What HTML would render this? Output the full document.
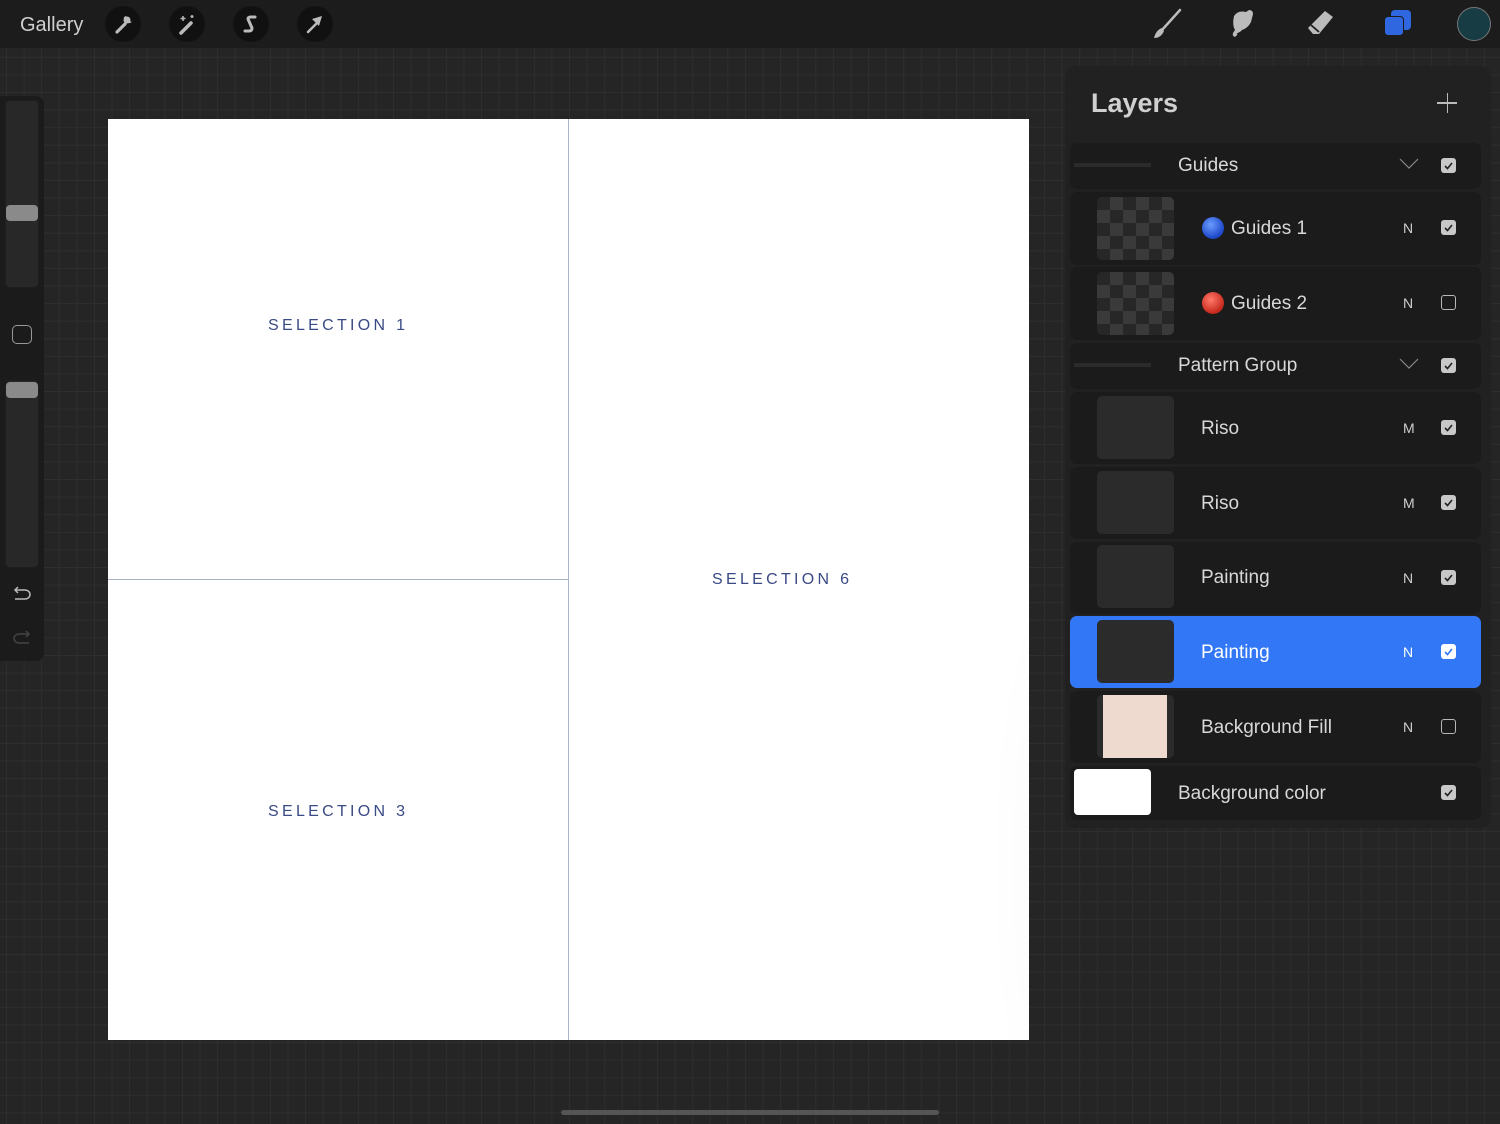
<!DOCTYPE html>
<html><head><meta charset="utf-8"><style>
*{margin:0;padding:0;box-sizing:border-box}
body{width:1500px;height:1124px;overflow:hidden;position:relative;font-family:"Liberation Sans",sans-serif;
background-color:#252525;
background-image:linear-gradient(to right,#2e2e2e 1px,transparent 1px),linear-gradient(to bottom,#2e2e2e 1px,transparent 1px);
background-size:17.6px 17.6px;background-position:6px 4px}
.a{position:absolute}
.top{left:0;top:0;width:1500px;height:48px;background:#1c1c1c}
.circ{width:36px;height:36px;border-radius:50%;background:#111;top:6px}
.canvas{left:108px;top:119px;width:921px;height:921px;background:#fff;
background-image:radial-gradient(ellipse 160px 420px at 1040px 750px,rgba(0,0,0,0.045),transparent)}
.sel{color:#3a4a85;font-size:16px;letter-spacing:3.3px}
.side{left:0;top:96px;width:44px;height:565px;background:#1b1b1b;border-radius:0 8px 8px 0}
.track{left:5px;width:34px;background:#282828;border-radius:5px;border:1px solid #1f1f1f}
.knob{left:6px;width:32px;height:16px;background:#8a8a8a;border-radius:4px}
.panel{left:1065px;top:66px;width:426px;height:762px;background:#212121;border-radius:10px}
.row{left:1070px;width:411px;background:#1b1b1b;border-radius:7px}
.th{left:1097px;width:77px;height:63px;background:#2b2b2b;border-radius:5px}
.chk{left:1441px;width:15px;height:15px;border-radius:3px;background:#c8c8c8}
.chk svg{position:absolute;left:3px;top:3px}
.unchk{left:1441px;width:15px;height:15px;border-radius:3px;border:1.5px solid #b8b8b8}
.t{color:#d8d8d8;font-size:19px}
.m{color:#cfcfcf;font-size:14px;left:1403px}
.checker{background-color:#272727;background-image:linear-gradient(45deg,#3a3a3a 25%,transparent 25%,transparent 75%,#3a3a3a 75%),linear-gradient(45deg,#3a3a3a 25%,transparent 25%,transparent 75%,#3a3a3a 75%);background-size:26px 26px;background-position:0 0,13px 13px}
.dot{width:22px;height:22px;border-radius:50%}
</style></head><body>
<div class="a top"></div>
<div class="a" style="left:20px;top:14px;color:#cfcfcf;font-size:20px">Gallery</div>
<div class="a circ" style="left:105px"></div><div class="a circ" style="left:169px"></div><div class="a circ" style="left:233px"></div><div class="a circ" style="left:297px"></div>
<svg class="a" style="left:105px;top:6px" width="36" height="36" viewBox="0 0 36 36"><path d="M12 26l8-8" stroke="#bbb" stroke-width="3.2" stroke-linecap="round"/><path d="M19 11a5 5 0 0 0 6 6l2-1l-3-1l-2-2l-1-3z" fill="#bbb"/><circle cx="22" cy="14" r="3.5" fill="#bbb"/></svg>
<svg class="a" style="left:169px;top:6px" width="36" height="36" viewBox="0 0 36 36"><path d="M12 27l10-10" stroke="#bbb" stroke-width="3.5" stroke-linecap="round"/><path d="M14 10v5M11.5 12.5h5M23 9v3M21.5 10.5h3" stroke="#bbb" stroke-width="1.5"/></svg>
<svg class="a" style="left:233px;top:6px" width="36" height="36" viewBox="0 0 36 36"><path d="M22 11h-4q-3 0-3 2l4 9q0 3-3 3h-4" stroke="#bbb" stroke-width="3" fill="none" stroke-linecap="round"/></svg>
<svg class="a" style="left:297px;top:6px" width="36" height="36" viewBox="0 0 36 36"><path d="M11 26l10-10" stroke="#bbb" stroke-width="2.5" stroke-linecap="round"/><path d="M25 10l-3 10-7-7z" fill="#bbb"/></svg>
<svg class="a" style="left:1150px;top:8px" width="34" height="32" viewBox="0 0 34 32"><path d="M30 2L12 22" stroke="#bbb" stroke-width="2.5" stroke-linecap="round"/><path d="M12 20q-6 2-8 10q7 0 10-7z" fill="#bbb"/></svg>
<svg class="a" style="left:1228px;top:8px" width="30" height="32" viewBox="0 0 30 32"><path d="M6 8q4-6 12-4l3-2q4 0 4 4l-2 8q-3 6-9 8l-7 7q-3-1-2-4l2-3q-3-5-1-14z" fill="#bbb"/><path d="M9 26q4-2 8-4" stroke="#1c1c1c" stroke-width="1.2" fill="none"/></svg>
<svg class="a" style="left:1303px;top:8px" width="34" height="32" viewBox="0 0 34 32"><path d="M22 3l8 6l-14 17h-6l-5-6z" fill="#bbb"/><path d="M8 17l8 7" stroke="#1c1c1c" stroke-width="1.8"/></svg>
<div class="a" style="left:1391px;top:10px;width:20px;height:20px;background:#2f67e0;border-radius:4px"></div>
<div class="a" style="left:1384px;top:16px;width:20px;height:20px;background:#2f67e0;border-radius:4px;border:1.5px solid #1c1c1c"></div>
<div class="a" style="left:1457px;top:7px;width:34px;height:34px;border-radius:50%;background:#173c44;border:1.5px solid #777"></div>

<div class="a canvas"></div>
<div class="a" style="left:568px;top:119px;width:1px;height:921px;background:#a9b2c6"></div>
<div class="a" style="left:108px;top:579px;width:460px;height:1px;background:#a9b2c6"></div>
<div class="a sel" style="left:268px;top:317px">SELECTION 1</div>
<div class="a sel" style="left:268px;top:803px">SELECTION 3</div>
<div class="a sel" style="left:712px;top:571px">SELECTION 6</div>

<div class="a side"></div>
<div class="a track" style="top:100px;height:188px"></div>
<div class="a knob" style="top:205px"></div>
<div class="a" style="left:12px;top:325px;width:20px;height:19px;border:1.5px solid #999;border-radius:5px"></div>
<div class="a track" style="top:380px;height:188px"></div>
<div class="a knob" style="top:382px"></div>
<svg class="a" style="left:10px;top:585px" width="24" height="20" viewBox="0 0 24 20"><path d="M5 5h10a5 4.5 0 0 1 0 9h-10M8 2l-3 3l3 3" stroke="#bbb" stroke-width="1.5" fill="none"/></svg>
<svg class="a" style="left:10px;top:628px" width="24" height="20" viewBox="0 0 24 20"><path d="M19 6h-10a5 4.5 0 0 0 0 9h10M16 3l3 3l-3 3" stroke="#444" stroke-width="1.5" fill="none"/></svg>

<div class="a panel"></div>
<div class="a" style="left:1091px;top:88px;color:#d0d0d0;font-size:27px;font-weight:bold">Layers</div>
<div class="a" style="left:1437px;top:102px;width:20px;height:1.5px;background:#bbb"></div>
<div class="a" style="left:1446.5px;top:93px;width:1.5px;height:20px;background:#bbb"></div>

<div class="a row" style="top:143px;height:46px"></div>
<div class="a" style="left:1074px;top:163px;width:77px;height:4px;background:#2b2b2b"></div>
<div class="a t" style="left:1178px;top:155px">Guides</div>
<svg class="a" style="left:1399px;top:158px" width="20" height="12"><path d="M1 1l9 9l9-9" stroke="#888" stroke-width="1.2" fill="none"/></svg>
<div class="a chk" style="top:158px"><svg width="9" height="9"><path d="M1 5l2.5 2.5L8 2" stroke="#222" stroke-width="1.6" fill="none"/></svg></div>

<div class="a row" style="top:192px;height:73px"></div>
<div class="a th checker" style="top:197px"></div>
<div class="a dot" style="left:1202px;top:217px;background:radial-gradient(circle at 40% 35%,#6b9cff,#1c47c8 70%)"></div>
<div class="a t" style="left:1231px;top:218px">Guides 1</div>
<div class="a m" style="top:220px">N</div>
<div class="a chk" style="top:220px"><svg width="9" height="9"><path d="M1 5l2.5 2.5L8 2" stroke="#222" stroke-width="1.6" fill="none"/></svg></div>

<div class="a row" style="top:267px;height:73px"></div>
<div class="a th checker" style="top:272px"></div>
<div class="a dot" style="left:1202px;top:292px;background:radial-gradient(circle at 40% 35%,#ff7a6a,#c6281c 70%)"></div>
<div class="a t" style="left:1231px;top:293px">Guides 2</div>
<div class="a m" style="top:295px">N</div>
<div class="a unchk" style="top:295px"></div>

<div class="a row" style="top:343px;height:46px"></div>
<div class="a" style="left:1074px;top:363px;width:77px;height:4px;background:#2b2b2b"></div>
<div class="a t" style="left:1178px;top:355px">Pattern Group</div>
<svg class="a" style="left:1399px;top:358px" width="20" height="12"><path d="M1 1l9 9l9-9" stroke="#888" stroke-width="1.2" fill="none"/></svg>
<div class="a chk" style="top:358px"><svg width="9" height="9"><path d="M1 5l2.5 2.5L8 2" stroke="#222" stroke-width="1.6" fill="none"/></svg></div>

<div class="a row" style="top:392px;height:72px"></div>
<div class="a th" style="top:396px"></div>
<div class="a t" style="left:1201px;top:418px">Riso</div>
<div class="a m" style="top:420px">M</div>
<div class="a chk" style="top:420px"><svg width="9" height="9"><path d="M1 5l2.5 2.5L8 2" stroke="#222" stroke-width="1.6" fill="none"/></svg></div>

<div class="a row" style="top:467px;height:72px"></div>
<div class="a th" style="top:471px"></div>
<div class="a t" style="left:1201px;top:493px">Riso</div>
<div class="a m" style="top:495px">M</div>
<div class="a chk" style="top:495px"><svg width="9" height="9"><path d="M1 5l2.5 2.5L8 2" stroke="#222" stroke-width="1.6" fill="none"/></svg></div>

<div class="a row" style="top:542px;height:72px"></div>
<div class="a th" style="top:545px"></div>
<div class="a t" style="left:1201px;top:567px">Painting</div>
<div class="a m" style="top:570px">N</div>
<div class="a chk" style="top:570px"><svg width="9" height="9"><path d="M1 5l2.5 2.5L8 2" stroke="#222" stroke-width="1.6" fill="none"/></svg></div>

<div class="a row" style="top:616px;height:72px;background:#3177f6"></div>
<div class="a th" style="top:620px"></div>
<div class="a t" style="left:1201px;top:642px;color:#fff">Painting</div>
<div class="a m" style="top:644px;color:#fff">N</div>
<div class="a chk" style="top:644px;background:#fff"><svg width="9" height="9"><path d="M1 5l2.5 2.5L8 2" stroke="#3177f6" stroke-width="1.6" fill="none"/></svg></div>

<div class="a row" style="top:691px;height:72px"></div>
<div class="a th" style="top:695px"></div>
<div class="a" style="left:1103px;top:695px;width:64px;height:63px;background:#efdad0"></div>
<div class="a t" style="left:1201px;top:717px">Background Fill</div>
<div class="a m" style="top:719px">N</div>
<div class="a unchk" style="top:719px"></div>

<div class="a row" style="top:766px;height:54px"></div>
<div class="a" style="left:1074px;top:769px;width:77px;height:46px;background:#fff;border-radius:4px"></div>
<div class="a t" style="left:1178px;top:783px">Background color</div>
<div class="a chk" style="top:785px"><svg width="9" height="9"><path d="M1 5l2.5 2.5L8 2" stroke="#222" stroke-width="1.6" fill="none"/></svg></div>

<div class="a" style="left:561px;top:1110px;width:378px;height:5px;background:#555;border-radius:3px"></div>
</body></html>
